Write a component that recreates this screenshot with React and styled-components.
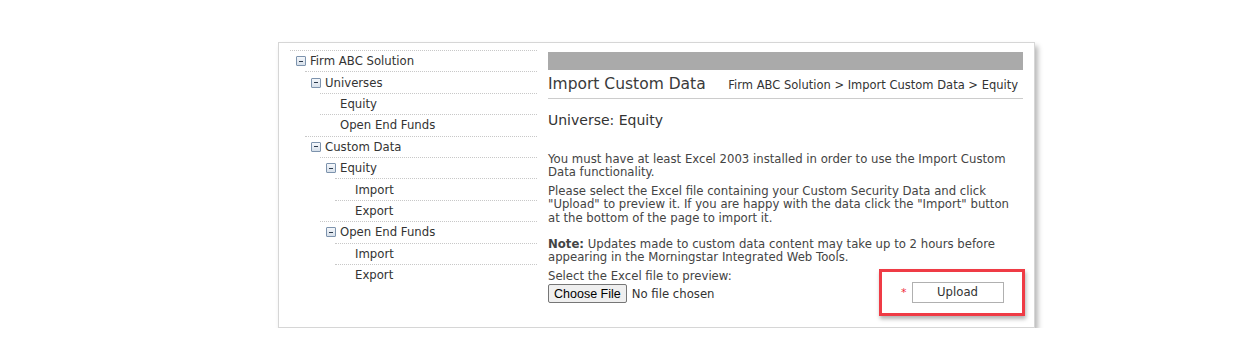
import React from 'react';
import styled, { createGlobalStyle } from 'styled-components';

const GlobalStyle = createGlobalStyle`
  body {
    margin: 0;
    background: #ffffff;
    font-family: "DejaVu Sans", Verdana, sans-serif;
    color: #333333;
  }
`;

const Page = styled.div`
  padding: 42px 0 0 278px;
`;

const Panel = styled.div`
  width: 757px;
  height: 286px;
  box-sizing: border-box;
  border: 1px solid #d6d6d6;
  box-shadow: 3px 4px 5px rgba(0, 0, 0, 0.28);
  display: flex;
  gap: 11px;
  padding: 7px 11px 0 11px;
  background: #fff;
`;

const Tree = styled.div`
  width: 247px;
  flex: none;
`;

const TreeRow = styled.div`
  height: 21.4px;
  box-sizing: border-box;
  border-top: 1px dotted #c8c8c8;
  margin-left: ${p => p.level * 15}px;
  display: flex;
  align-items: center;
  gap: 4px;
  padding-left: ${p => (p.leaf ? 20 : 6)}px;
  font-size: 11.7px;
  color: #333;
  white-space: nowrap;
`;

const Toggle = styled.span`
  width: 8px;
  height: 8px;
  border: 1px solid #7d93ad;
  border-radius: 1px;
  background: linear-gradient(#f4f7fb, #d7e0ea);
  position: relative;
  flex: none;
  &::after {
    content: '';
    position: absolute;
    left: 2px;
    right: 2px;
    top: 3.5px;
    height: 1px;
    background: #2b3a4c;
  }
`;

const Main = styled.div`
  width: 475px;
  flex: none;
`;

const GrayBar = styled.div`
  height: 18px;
  background: #aaaaaa;
  margin-top: 2px;
`;

const TitleRow = styled.div`
  display: flex;
  justify-content: space-between;
  align-items: baseline;
  height: 29px;
  padding-top: 5px;
  box-sizing: border-box;
  border-bottom: 1px solid #cccccc;
  padding-right: 5px;
`;

const Title = styled.div`
  font-size: 15.5px;
  color: #3a3a3a;
`;

const Crumbs = styled.div`
  font-size: 11.5px;
  color: #333;
`;

const Universe = styled.div`
  font-size: 14px;
  line-height: 16px;
  margin-top: 13px;
  color: #333;
`;

const Para = styled.p`
  font-size: 11.7px;
  line-height: 13.4px;
  margin: ${p => p.top}px 0 0 0;
  color: #444;
`;

const Bottom = styled.div`
  display: flex;
  justify-content: space-between;
  align-items: flex-start;
  margin-top: 5px;
`;

const FileLeft = styled.div`
  display: flex;
  flex-direction: column;
  align-items: flex-start;
  gap: 1px;
`;

const FileInput = styled.div`
  display: flex;
  align-items: center;
  gap: 5px;
  font-size: 11.7px;
  color: #333;
`;

const ChooseBtn = styled.button`
  font-family: "Liberation Sans", Arial, sans-serif;
  font-size: 12.5px;
  height: 19px;
  padding: 0 5px;
  background: #efefef;
  border: 1px solid #767676;
  border-radius: 2px;
  color: #000;
  margin: 0;
`;

const Highlight = styled.div`
  width: 146px;
  height: 47px;
  box-sizing: border-box;
  border: 3px solid #ef3b45;
  box-shadow: 1px 3px 4px rgba(0, 0, 0, 0.3);
  display: flex;
  align-items: center;
  padding-left: 19px;
  gap: 5px;
  margin-right: -2px;
  margin-top: -1px;
`;

const Star = styled.span`
  color: #ef2a3a;
  font-size: 11px;
`;

const UploadBtn = styled.button`
  width: 92px;
  height: 21px;
  background: #fff;
  border: 1px solid #b0b0b0;
  font-family: "DejaVu Sans", Verdana, sans-serif;
  font-size: 11.7px;
  color: #333;
  margin: 0;
`;

const tree = [
  { level: 0, label: 'Firm ABC Solution' },
  { level: 1, label: 'Universes' },
  { level: 2, label: 'Equity', leaf: true },
  { level: 2, label: 'Open End Funds', leaf: true },
  { level: 1, label: 'Custom Data' },
  { level: 2, label: 'Equity' },
  { level: 3, label: 'Import', leaf: true },
  { level: 3, label: 'Export', leaf: true },
  { level: 2, label: 'Open End Funds' },
  { level: 3, label: 'Import', leaf: true },
  { level: 3, label: 'Export', leaf: true }
];

const App = () => {
  return (
    <>
      <GlobalStyle />
      <Page>
        <Panel>
          <Tree>
            {tree.map((item, i) => (
              <TreeRow key={i} level={item.level} leaf={item.leaf}>
                {!item.leaf && <Toggle />}
                {item.label}
              </TreeRow>
            ))}
          </Tree>
          <Main>
            <GrayBar />
            <TitleRow>
              <Title>Import Custom Data</Title>
              <Crumbs>Firm ABC Solution &gt; Import Custom Data &gt; Equity</Crumbs>
            </TitleRow>
            <Universe>Universe: Equity</Universe>
            <Para top={25}>
              You must have at least Excel 2003 installed in order to use the Import Custom
              Data functionality.
            </Para>
            <Para top={5}>
              Please select the Excel file containing your Custom Security Data and click
              "Upload" to preview it. If you are happy with the data click the "Import" button
              at the bottom of the page to import it.
            </Para>
            <Para top={13}>
              <b>Note:</b> Updates made to custom data content may take up to 2 hours before
              appearing in the Morningstar Integrated Web Tools.
            </Para>
            <Bottom>
              <FileLeft>
                <Para top={0}>Select the Excel file to preview:</Para>
                <FileInput>
                  <ChooseBtn>Choose File</ChooseBtn>
                  No file chosen
                </FileInput>
              </FileLeft>
              <Highlight>
                <Star>*</Star>
                <UploadBtn>Upload</UploadBtn>
              </Highlight>
            </Bottom>
          </Main>
        </Panel>
      </Page>
    </>
  );
};

export default App;
